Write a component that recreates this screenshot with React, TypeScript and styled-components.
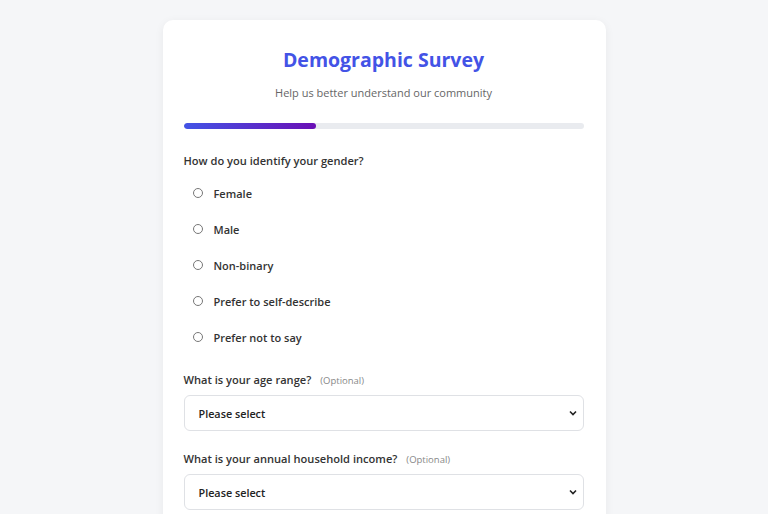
import React from "react";
import styled, { createGlobalStyle } from "styled-components";

const Global = createGlobalStyle`
  html, body { margin: 0; padding: 0; background: #f5f6f8; }
  body { font-family: "Open Sans", "Noto Sans", sans-serif; color: #333; }
  * { box-sizing: border-box; }
`;

const Page = styled.div`
  padding: 20px 0;
  display: flex;
  justify-content: center;
`;

const Card = styled.div`
  width: 443px;
  background: #fff;
  border-radius: 10px;
  box-shadow: 0 2px 10px rgba(0, 0, 0, 0.06);
  padding: 25px 22px 30px 21px;
`;

const Title = styled.h1`
  margin: 0;
  text-align: center;
  font-size: 19.5px;
  font-weight: 700;
  color: #4353e6;
  line-height: 30px;
`;

const Subtitle = styled.p`
  margin: 9px 0 0;
  text-align: center;
  font-size: 11px;
  color: #666;
  line-height: 18px;
`;

const Track = styled.div`
  margin-top: 21px;
  height: 6px;
  border-radius: 3px;
  background: #e9ebef;
  overflow: hidden;
`;

const Fill = styled.div`
  height: 100%;
  border-radius: 3px;
  background: linear-gradient(90deg, #4354e6, #6a0fb5);
`;

const Question = styled.div`
  margin-top: 23px;
`;

const Label = styled.div`
  font-size: 11.1px;
  font-weight: 600;
  color: #333;
  line-height: 18px;
  display: flex;
  align-items: baseline;
`;

const Optional = styled.span`
  font-size: 9.5px;
  font-weight: 400;
  color: #888;
  margin-left: 9px;
`;

const Options = styled.div`
  display: flex;
  flex-direction: column;
  margin-top: 5px;
`;

const Option = styled.label`
  display: flex;
  align-items: center;
  height: 36px;
  padding-left: 9px;
  font-size: 11px;
  font-weight: 600;
  color: #333;
`;

const Radio = styled.span`
  width: 10px;
  height: 10px;
  border-radius: 50%;
  border: 1px solid #777;
  margin-right: 11px;
  flex: none;
`;

const Field = styled.div<{ $gap: number }>`
  margin-top: ${(p) => p.$gap}px;
`;

const Select = styled.div`
  margin-top: 5px;
  height: 36px;
  border: 1px solid #dfe1e5;
  border-radius: 6px;
  display: flex;
  align-items: center;
  justify-content: space-between;
  padding: 0 5px 0 14px;
  font-size: 10.8px;
  font-weight: 600;
  color: #222;
`;

const options = ["Female", "Male", "Non-binary", "Prefer to self-describe", "Prefer not to say"];

export default function App() {
  return (
    <>
      <Global />
      <Page>
        <Card>
          <Title>Demographic Survey</Title>
          <Subtitle>Help us better understand our community</Subtitle>
          <Track>
            <Fill style={{ width: "33%" }} />
          </Track>
          <Question>
            <Label>How do you identify your gender?</Label>
            <Options>
              {options.map((o) => (
                <Option key={o}>
                  <Radio />
                  {o}
                </Option>
              ))}
            </Options>
          </Question>
          <Field $gap={16}>
            <Label>
              What is your age range?<Optional>(Optional)</Optional>
            </Label>
            <Select>
              Please select
              <svg width="10" height="10" viewBox="0 0 10 10">
                <path d="M2 3.5 L5 6.5 L8 3.5" fill="none" stroke="#222" strokeWidth="1.6" />
              </svg>
            </Select>
          </Field>
          <Field $gap={19}>
            <Label>
              What is your annual household income?<Optional>(Optional)</Optional>
            </Label>
            <Select>
              Please select
              <svg width="10" height="10" viewBox="0 0 10 10">
                <path d="M2 3.5 L5 6.5 L8 3.5" fill="none" stroke="#222" strokeWidth="1.6" />
              </svg>
            </Select>
          </Field>
        </Card>
      </Page>
    </>
  );
}
